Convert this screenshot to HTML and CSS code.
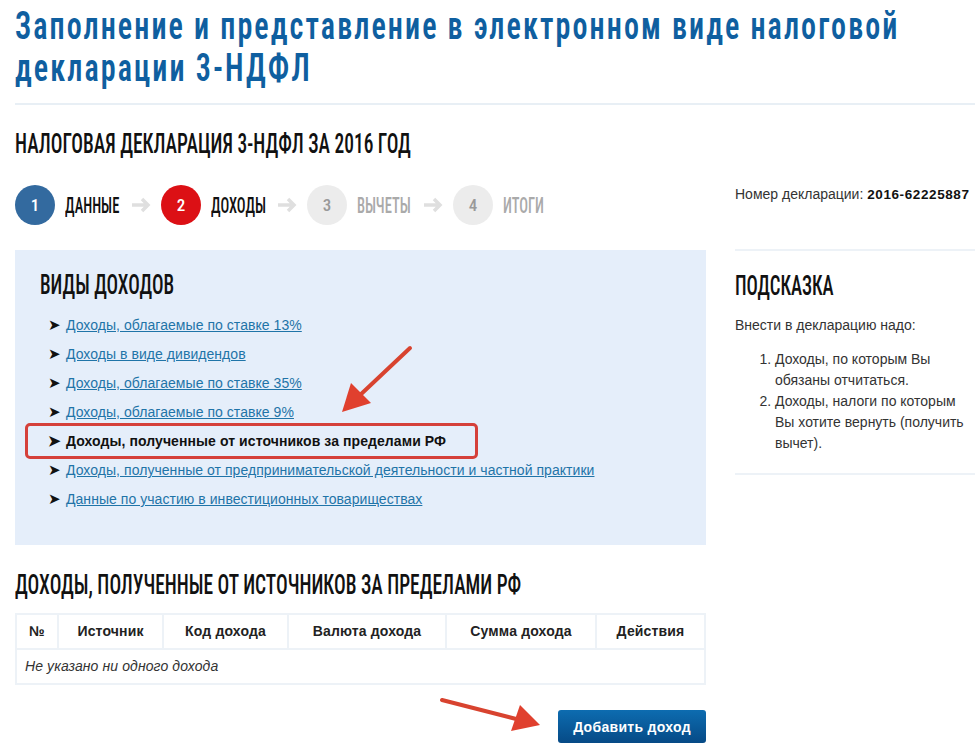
FILE: index.html
```html
<!DOCTYPE html>
<html lang="ru">
<head>
    <meta charset="UTF-8">
    <title>Заполнение декларации 3-НДФЛ</title>
    <link rel="stylesheet" href="styles.css">
</head>
<body>
    <div class="page">
        <div class="head">
            <h1>Заполнение и представление в электронном виде налоговой декларации 3-НДФЛ</h1>
        </div>
        <div class="columns">
            <div class="main">
                <h2 class="decl-title">Налоговая декларация 3-НДФЛ за 2016 год</h2>
                <div class="steps">
                    <div class="step"><span class="num blue">1</span><span class="step-name">Данные</span></div>
                    <svg class="step-arrow" viewBox="0 0 20 16"><path d="M1 8H17M11 2l6 6-6 6" /></svg>
                    <div class="step"><span class="num red">2</span><span class="step-name">Доходы</span></div>
                    <svg class="step-arrow" viewBox="0 0 20 16"><path d="M1 8H17M11 2l6 6-6 6" /></svg>
                    <div class="step off"><span class="num">3</span><span class="step-name">Вычеты</span></div>
                    <svg class="step-arrow" viewBox="0 0 20 16"><path d="M1 8H17M11 2l6 6-6 6" /></svg>
                    <div class="step off"><span class="num">4</span><span class="step-name">Итоги</span></div>
                </div>
                <div class="types">
                    <h3>Виды доходов</h3>
                    <ul>
                        <li><a href="#">Доходы, облагаемые по ставке 13%</a></li>
                        <li><a href="#">Доходы в виде дивидендов</a></li>
                        <li><a href="#">Доходы, облагаемые по ставке 35%</a></li>
                        <li><a href="#">Доходы, облагаемые по ставке 9%</a></li>
                        <li class="current">Доходы, полученные от источников за пределами РФ</li>
                        <li><a href="#">Доходы, полученные от предпринимательской деятельности и частной практики</a></li>
                        <li><a href="#">Данные по участию в инвестиционных товариществах</a></li>
                    </ul>
                </div>
                <h2 class="income-title">Доходы, полученные от источников за пределами РФ</h2>
                <table>
                    <tr>
                        <th class="c1">№</th>
                        <th class="c2">Источник</th>
                        <th class="c3">Код дохода</th>
                        <th class="c4">Валюта дохода</th>
                        <th class="c5">Сумма дохода</th>
                        <th>Действия</th>
                    </tr>
                    <tr>
                        <td colspan="6" class="empty">Не указано ни одного дохода</td>
                    </tr>
                </table>
                <div class="actions"><button>Добавить доход</button></div>
            </div>
            <div class="side">
                <div class="decl-num">Номер декларации: <b>2016-62225887</b></div>
                <div class="hint">
                    <h3>Подсказка</h3>
                    <p>Внести в декларацию надо:</p>
                    <ol>
                        <li>Доходы, по которым Вы обязаны отчитаться.</li>
                        <li>Доходы, налоги по которым Вы хотите вернуть (получить вычет).</li>
                    </ol>
                </div>
            </div>
        </div>
    </div>

    <!-- red marks drawn over the page -->
    <div class="frame"></div>
    <svg class="mark" viewBox="0 0 980 750">
        <path d="M410 348L358 397" class="mark-line" />
        <path d="M342 412L351 383L371 403Z" class="mark-head" />
        <path d="M442 700L520 720" class="mark-line" />
        <path d="M540 725L511 731L520 705Z" class="mark-head" />
    </svg>
</body>
</html>
```

FILE: styles.css
```css
body {
    margin: 0;
    font-family: "Liberation Sans", Arial, sans-serif;
    font-size: 14px;
    color: #222;
    background: #fff;
}
.page {
    width: 975px;
    padding-top: 5px;
    overflow: hidden;
}
h1, h2, h3, .num, .step-name {
    margin: 0;
    font-family: Roboto, sans-serif;
    font-stretch: 75%;
    font-weight: 500;
}
/* the headings use a very narrow face, squeeze the condensed one further */
h1, h2, h3, .step-name {
    transform-origin: left center;
    white-space: nowrap;
}
.head {
    margin-left: 15px;
    padding-bottom: 14px;
    border-bottom: 2px solid #e8eff5;
}
h1 {
    width: 1225px;
    white-space: normal;
    transform: scaleX(0.771);
    transform-origin: left top;
    font-size: 39px;
    font-weight: 600;
    line-height: 42px;
    letter-spacing: 2.7px;
    color: #0f5fa0;
}
.columns {
    display: flex;
    padding-left: 15px;
}
.main {
    width: 691px;
}
.side {
    width: 240px;
    margin-left: 29px;
}
h2, h3 {
    font-size: 27px;
    text-transform: uppercase;
    color: #111;
}
h2 {
    transform: scaleX(0.72);
}
h3 {
    transform: scaleX(0.695);
}
.decl-title {
    margin-top: 25px;
    line-height: 28px;
}
.steps {
    display: flex;
    align-items: center;
    margin-top: 27px;
    height: 40px;
}
.step {
    display: flex;
    align-items: center;
    gap: 10px;
}
.num {
    display: flex;
    align-items: center;
    justify-content: center;
    width: 40px;
    height: 40px;
    border-radius: 50%;
    background: #ececec;
    color: #999;
    font-size: 17px;
}
.num.blue {
    background: #336a9f;
    color: #fff;
}
.num.red {
    background: #dc1015;
    color: #fff;
}
.step-name {
    width: 56px;
    transform: scaleX(0.66);
    font-size: 22px;
    text-transform: uppercase;
    color: #111;
}
.step.off .step-name {
    color: #aaa;
}
.step-arrow {
    width: 20px;
    height: 16px;
    margin: 0 10px;
    fill: none;
    stroke: #dfdfdf;
    stroke-width: 3.5;
}
.types {
    margin-top: 25px;
    height: 295px;
    padding: 21px 25px 0;
    box-sizing: border-box;
    background: #e5eefa;
}
.types h3 {
    transform: scaleX(0.71);
    line-height: 28px;
}
.types ul {
    list-style: none;
    margin: 15px 0 0;
    padding: 0 0 0 8px;
}
.types li {
    height: 29px;
    line-height: 22px;
    padding-left: 18px;
    position: relative;
}
.types li::before {
    content: "➤";
    position: absolute;
    left: 0;
    top: 0;
    font-size: 15px;
    color: #111;
}
.types a {
    letter-spacing: 0.05px;
    color: #1f74a8;
}
.types .current {
    font-weight: bold;
    letter-spacing: 0.08px;
    color: #111;
}
.income-title {
    margin-top: 26px;
    line-height: 28px;
}
table {
    width: 100%;
    margin-top: 14px;
    border-collapse: collapse;
    border: 2px solid #edf2f7;
}
th, td {
    border: 2px solid #edf2f7;
    height: 32px;
    padding: 0 0 1px;
}
th {
    font-size: 14px;
    letter-spacing: 0.15px;
    color: #222;
}
.c1 { width: 40px; }
.c2 { width: 103px; }
.c3 { width: 123px; }
.c4 { width: 156px; }
.c5 { width: 148px; }
.empty {
    padding-left: 8px;
    font-style: italic;
    letter-spacing: 0.1px;
    color: #333;
}
.actions {
    display: flex;
    justify-content: flex-end;
    margin-top: 25px;
}
button {
    width: 148px;
    height: 33px;
    border: 0;
    border-radius: 3px;
    background: linear-gradient(#0d6cb0, #064a86);
    color: #fff;
    font-family: "Liberation Sans", Arial, sans-serif;
    font-weight: bold;
    font-size: 14px;
    letter-spacing: 0.3px;
}
.decl-num {
    margin-top: 79px;
    height: 65px;
    line-height: 20px;
    color: #333;
}
.decl-num b {
    color: #111;
    font-size: 13.5px;
    letter-spacing: 0.6px;
}
.hint {
    border-top: 2px solid #edf2f7;
    border-bottom: 2px solid #edf2f7;
    padding: 21px 0 19px;
}
.hint h3 {
    line-height: 28px;
}
.hint p {
    margin: 15px 0 0;
    line-height: 21px;
    color: #333;
}
.hint ol {
    margin: 13px 0 0;
    padding-left: 40px;
    line-height: 21px;
    color: #333;
}
.frame {
    position: absolute;
    left: 25px;
    top: 423px;
    width: 447px;
    height: 30px;
    border: 3px solid #d5403a;
    border-radius: 5px;
}
.mark {
    position: absolute;
    left: 0;
    top: 0;
    width: 980px;
    height: 750px;
    pointer-events: none;
}
.mark-line {
    stroke: #d8432f;
    stroke-width: 4;
    stroke-linecap: round;
}
.mark-head {
    fill: #e0402e;
}
```
